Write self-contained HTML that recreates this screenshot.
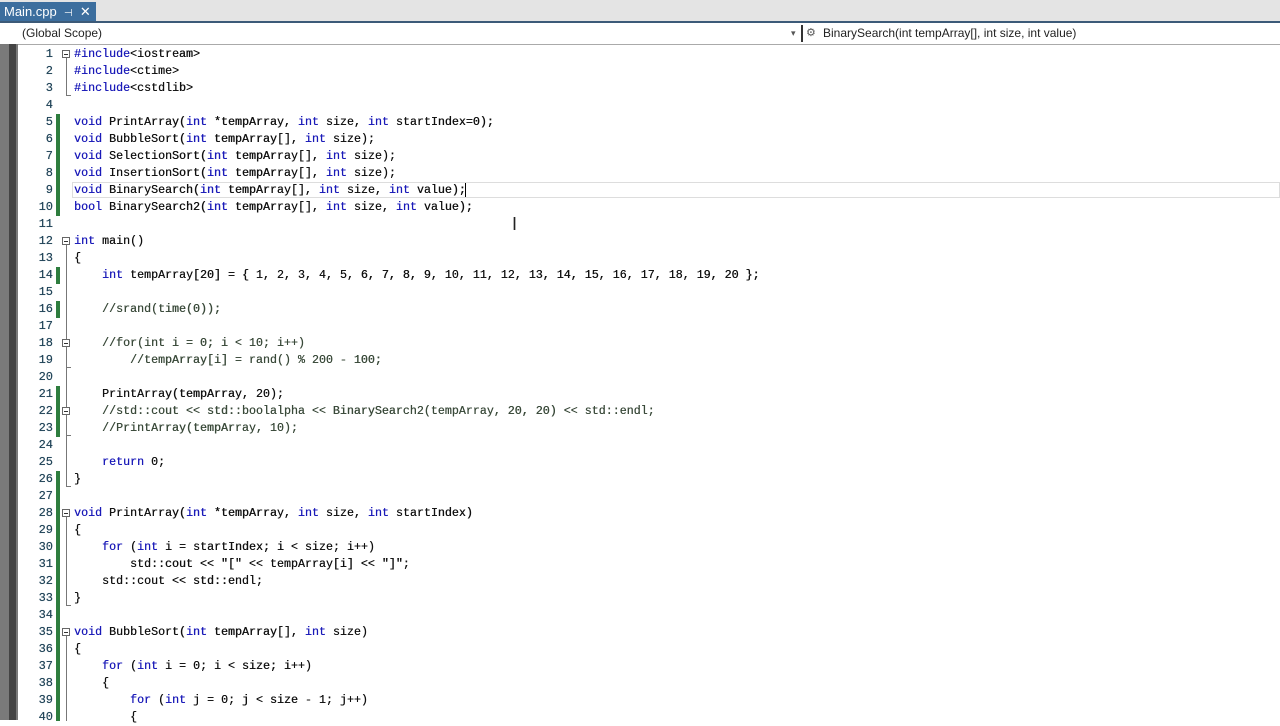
<!DOCTYPE html>
<html><head><style>
body{margin:0;width:1280px;height:720px;overflow:hidden;background:#fff;position:relative;font-family:"Liberation Sans",sans-serif}
.top{position:absolute;left:0;top:0;width:1280px;height:22px;background:#e4e4e4}
.tab{position:absolute;left:0;top:2px;width:96px;height:20px;background:#3c6e9e;color:#fff;font-size:13px;line-height:20px;padding-left:4px;box-sizing:border-box}
.bl{position:absolute;left:0;top:21px;width:1280px;height:2px;background:#3c5a78}
.scope{position:absolute;left:0;top:23px;width:1280px;height:21px;background:#fff;border-bottom:1px solid #aaa;font-size:12px;line-height:21px;color:#222}
.gut{position:absolute;left:0;top:44px;width:18px;height:676px;background:#7a7a7a}
.gut2{position:absolute;left:9px;top:44px;width:7px;height:676px;background:#444}
.ln{position:absolute;left:20px;width:33px;text-align:right;font-family:"Liberation Mono",monospace;font-size:12px;color:#23465a;line-height:17px;margin-top:1px;text-shadow:0 0 0.4px #23465a}
.c{position:absolute;left:74px;font-family:"Liberation Mono",monospace;font-size:11.67px;line-height:17px;white-space:pre;color:#111;margin-top:1px;text-shadow:0.3px 0 0 currentColor}
.k{color:#1a1ab8}.cm{color:#3a4a3a}
.g{position:absolute;left:56px;width:4px;background:#2e7d3e}
.fold{position:absolute;left:62px;width:8px;height:8px;border:1px solid #666;box-sizing:border-box;background:#fff}
.fold:after{content:"";position:absolute;left:1px;top:3px;width:4px;height:1px;background:#333}
.vl{position:absolute;left:66px;width:1px;background:#777}
.end{position:absolute;left:66px;width:5px;height:1px;background:#777}
</style></head><body>
<div class="top"></div>
<div class="tab">Main.cpp &nbsp;<span style="font-size:10px">⊣</span>&nbsp; ✕</div>
<div class="bl"></div>
<div class="scope"><span style="position:absolute;left:22px">(Global Scope)</span><span style="position:absolute;left:791px;font-size:9px;color:#555">▾</span><span style="position:absolute;left:801px;top:2px;width:2px;height:17px;background:#333"></span><span style="position:absolute;left:806px;font-size:11px;color:#555">⚙</span><span style="position:absolute;left:823px">BinarySearch(int tempArray[], int size, int value)</span></div>
<div class="gut"></div><div class="gut2"></div>
<div style="position:absolute;left:72px;top:182px;width:1208px;height:16px;border:1px solid #ddd;box-sizing:border-box"></div>
<div style="position:absolute;left:465px;top:183px;width:1px;height:14px;background:#000"></div>
<div style="position:absolute;left:512px;top:214px;font-size:18px;color:#222">I</div>
<div class="g" style="top:114px;height:102px"></div>
<div class="g" style="top:267px;height:17px"></div>
<div class="g" style="top:301px;height:17px"></div>
<div class="g" style="top:386px;height:51px"></div>
<div class="g" style="top:471px;height:250px"></div>
<div class="fold" style="top:50px"></div><div class="vl" style="top:58px;height:37px"></div><div class="end" style="top:95px"></div>
<div class="fold" style="top:237px"></div><div class="vl" style="top:245px;height:241px"></div><div class="end" style="top:486px"></div>
<div class="fold" style="top:339px"></div><div class="end" style="top:367px"></div>
<div class="fold" style="top:407px"></div><div class="end" style="top:435px"></div>
<div class="fold" style="top:509px"></div><div class="vl" style="top:517px;height:88px"></div><div class="end" style="top:605px"></div>
<div class="fold" style="top:628px"></div><div class="vl" style="top:636px;height:85px"></div>
<div class="ln" style="top:45px">1</div><div class="c" style="top:45px"><span class="k">#include</span>&lt;iostream&gt;</div>
<div class="ln" style="top:62px">2</div><div class="c" style="top:62px"><span class="k">#include</span>&lt;ctime&gt;</div>
<div class="ln" style="top:79px">3</div><div class="c" style="top:79px"><span class="k">#include</span>&lt;cstdlib&gt;</div>
<div class="ln" style="top:96px">4</div>
<div class="ln" style="top:113px">5</div><div class="c" style="top:113px"><span class="k">void</span> PrintArray(<span class="k">int</span> *tempArray, <span class="k">int</span> size, <span class="k">int</span> startIndex=0);</div>
<div class="ln" style="top:130px">6</div><div class="c" style="top:130px"><span class="k">void</span> BubbleSort(<span class="k">int</span> tempArray[], <span class="k">int</span> size);</div>
<div class="ln" style="top:147px">7</div><div class="c" style="top:147px"><span class="k">void</span> SelectionSort(<span class="k">int</span> tempArray[], <span class="k">int</span> size);</div>
<div class="ln" style="top:164px">8</div><div class="c" style="top:164px"><span class="k">void</span> InsertionSort(<span class="k">int</span> tempArray[], <span class="k">int</span> size);</div>
<div class="ln" style="top:181px">9</div><div class="c" style="top:181px"><span class="k">void</span> BinarySearch(<span class="k">int</span> tempArray[], <span class="k">int</span> size, <span class="k">int</span> value);</div>
<div class="ln" style="top:198px">10</div><div class="c" style="top:198px"><span class="k">bool</span> BinarySearch2(<span class="k">int</span> tempArray[], <span class="k">int</span> size, <span class="k">int</span> value);</div>
<div class="ln" style="top:215px">11</div>
<div class="ln" style="top:232px">12</div><div class="c" style="top:232px"><span class="k">int</span> main()</div>
<div class="ln" style="top:249px">13</div><div class="c" style="top:249px">{</div>
<div class="ln" style="top:266px">14</div><div class="c" style="top:266px">    <span class="k">int</span> tempArray[20] = { 1, 2, 3, 4, 5, 6, 7, 8, 9, 10, 11, 12, 13, 14, 15, 16, 17, 18, 19, 20 };</div>
<div class="ln" style="top:283px">15</div>
<div class="ln" style="top:300px">16</div><div class="c cm" style="top:300px">    //srand(time(0));</div>
<div class="ln" style="top:317px">17</div>
<div class="ln" style="top:334px">18</div><div class="c cm" style="top:334px">    //for(int i = 0; i &lt; 10; i++)</div>
<div class="ln" style="top:351px">19</div><div class="c cm" style="top:351px">        //tempArray[i] = rand() % 200 - 100;</div>
<div class="ln" style="top:368px">20</div>
<div class="ln" style="top:385px">21</div><div class="c" style="top:385px">    PrintArray(tempArray, 20);</div>
<div class="ln" style="top:402px">22</div><div class="c cm" style="top:402px">    //std::cout &lt;&lt; std::boolalpha &lt;&lt; BinarySearch2(tempArray, 20, 20) &lt;&lt; std::endl;</div>
<div class="ln" style="top:419px">23</div><div class="c cm" style="top:419px">    //PrintArray(tempArray, 10);</div>
<div class="ln" style="top:436px">24</div>
<div class="ln" style="top:453px">25</div><div class="c" style="top:453px">    <span class="k">return</span> 0;</div>
<div class="ln" style="top:470px">26</div><div class="c" style="top:470px">}</div>
<div class="ln" style="top:487px">27</div>
<div class="ln" style="top:504px">28</div><div class="c" style="top:504px"><span class="k">void</span> PrintArray(<span class="k">int</span> *tempArray, <span class="k">int</span> size, <span class="k">int</span> startIndex)</div>
<div class="ln" style="top:521px">29</div><div class="c" style="top:521px">{</div>
<div class="ln" style="top:538px">30</div><div class="c" style="top:538px">    <span class="k">for</span> (<span class="k">int</span> i = startIndex; i &lt; size; i++)</div>
<div class="ln" style="top:555px">31</div><div class="c" style="top:555px">        std::cout &lt;&lt; "[" &lt;&lt; tempArray[i] &lt;&lt; "]";</div>
<div class="ln" style="top:572px">32</div><div class="c" style="top:572px">    std::cout &lt;&lt; std::endl;</div>
<div class="ln" style="top:589px">33</div><div class="c" style="top:589px">}</div>
<div class="ln" style="top:606px">34</div>
<div class="ln" style="top:623px">35</div><div class="c" style="top:623px"><span class="k">void</span> BubbleSort(<span class="k">int</span> tempArray[], <span class="k">int</span> size)</div>
<div class="ln" style="top:640px">36</div><div class="c" style="top:640px">{</div>
<div class="ln" style="top:657px">37</div><div class="c" style="top:657px">    <span class="k">for</span> (<span class="k">int</span> i = 0; i &lt; size; i++)</div>
<div class="ln" style="top:674px">38</div><div class="c" style="top:674px">    {</div>
<div class="ln" style="top:691px">39</div><div class="c" style="top:691px">        <span class="k">for</span> (<span class="k">int</span> j = 0; j &lt; size - 1; j++)</div>
<div class="ln" style="top:708px">40</div><div class="c" style="top:708px">        {</div>
</body></html>
